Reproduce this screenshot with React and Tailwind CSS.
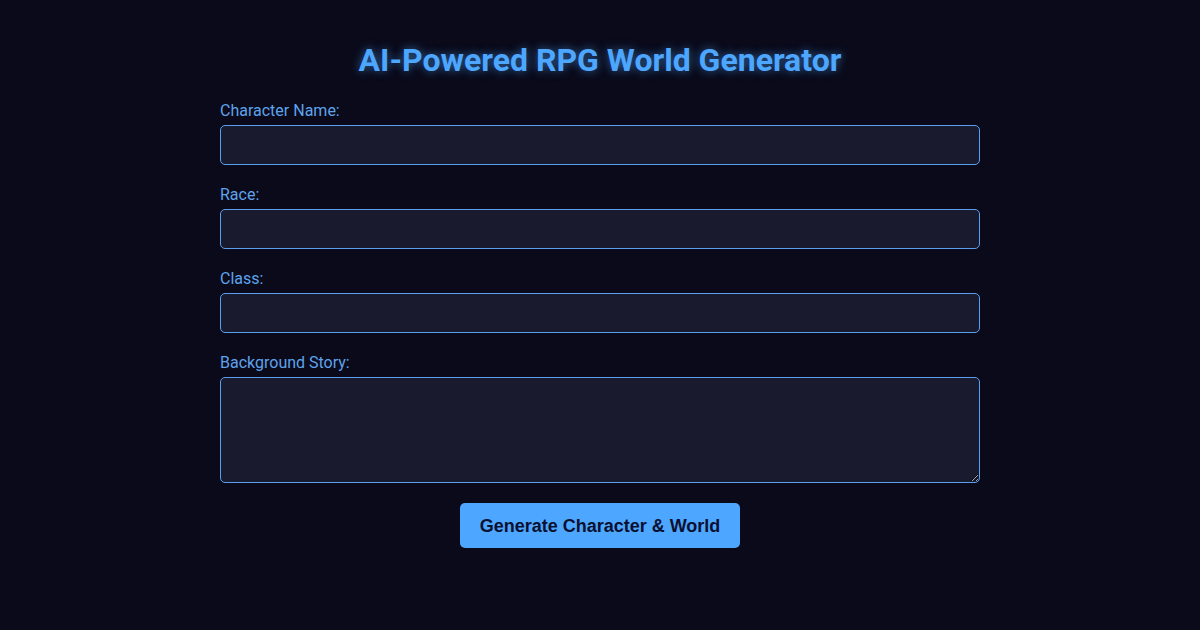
export default function App() {
  const fields = [
    { id: 'name', label: 'Character Name:' },
    { id: 'race', label: 'Race:' },
    { id: 'class', label: 'Class:' },
  ];

  return (
    <div className="min-h-[630px] w-full bg-[#0a0a1a] font-['Roboto',sans-serif]">
      <div className="mx-auto w-[760px] pt-[41px]">
        <h1 className="text-center text-[32px] font-bold leading-[38px] text-[#4da6ff] [text-shadow:0_0_10px_rgba(77,166,255,0.6)]">
          AI-Powered RPG World Generator
        </h1>

        <form className="mt-[22px]" onSubmit={(e) => e.preventDefault()}>
          {fields.map((f) => (
            <div key={f.id} className="mb-5">
              <label htmlFor={f.id} className="mb-[5px] block text-base leading-[19px] text-[#5ea3ec]">
                {f.label}
              </label>
              <input
                id={f.id}
                type="text"
                className="block h-10 w-full rounded-[5px] border border-[#5a9fee] bg-[#1a1a2e] px-2.5 text-white outline-none"
              />
            </div>
          ))}

          <div className="mb-5">
            <label htmlFor="story" className="mb-[5px] block text-base leading-[19px] text-[#5ea3ec]">
              Background Story:
            </label>
            <textarea
              id="story"
              className="block h-[106px] w-full resize-y rounded-[5px] border border-[#5a9fee] bg-[#1a1a2e] p-2.5 text-white outline-none"
            />
          </div>

          <div className="flex justify-center">
            <button
              type="submit"
              className="h-[45px] w-[280px] rounded-[5px] bg-[#4da6ff] font-['Liberation_Sans',sans-serif] text-lg font-bold text-[#0a1030]"
            >
              Generate Character &amp; World
            </button>
          </div>
        </form>
      </div>
    </div>
  );
}
